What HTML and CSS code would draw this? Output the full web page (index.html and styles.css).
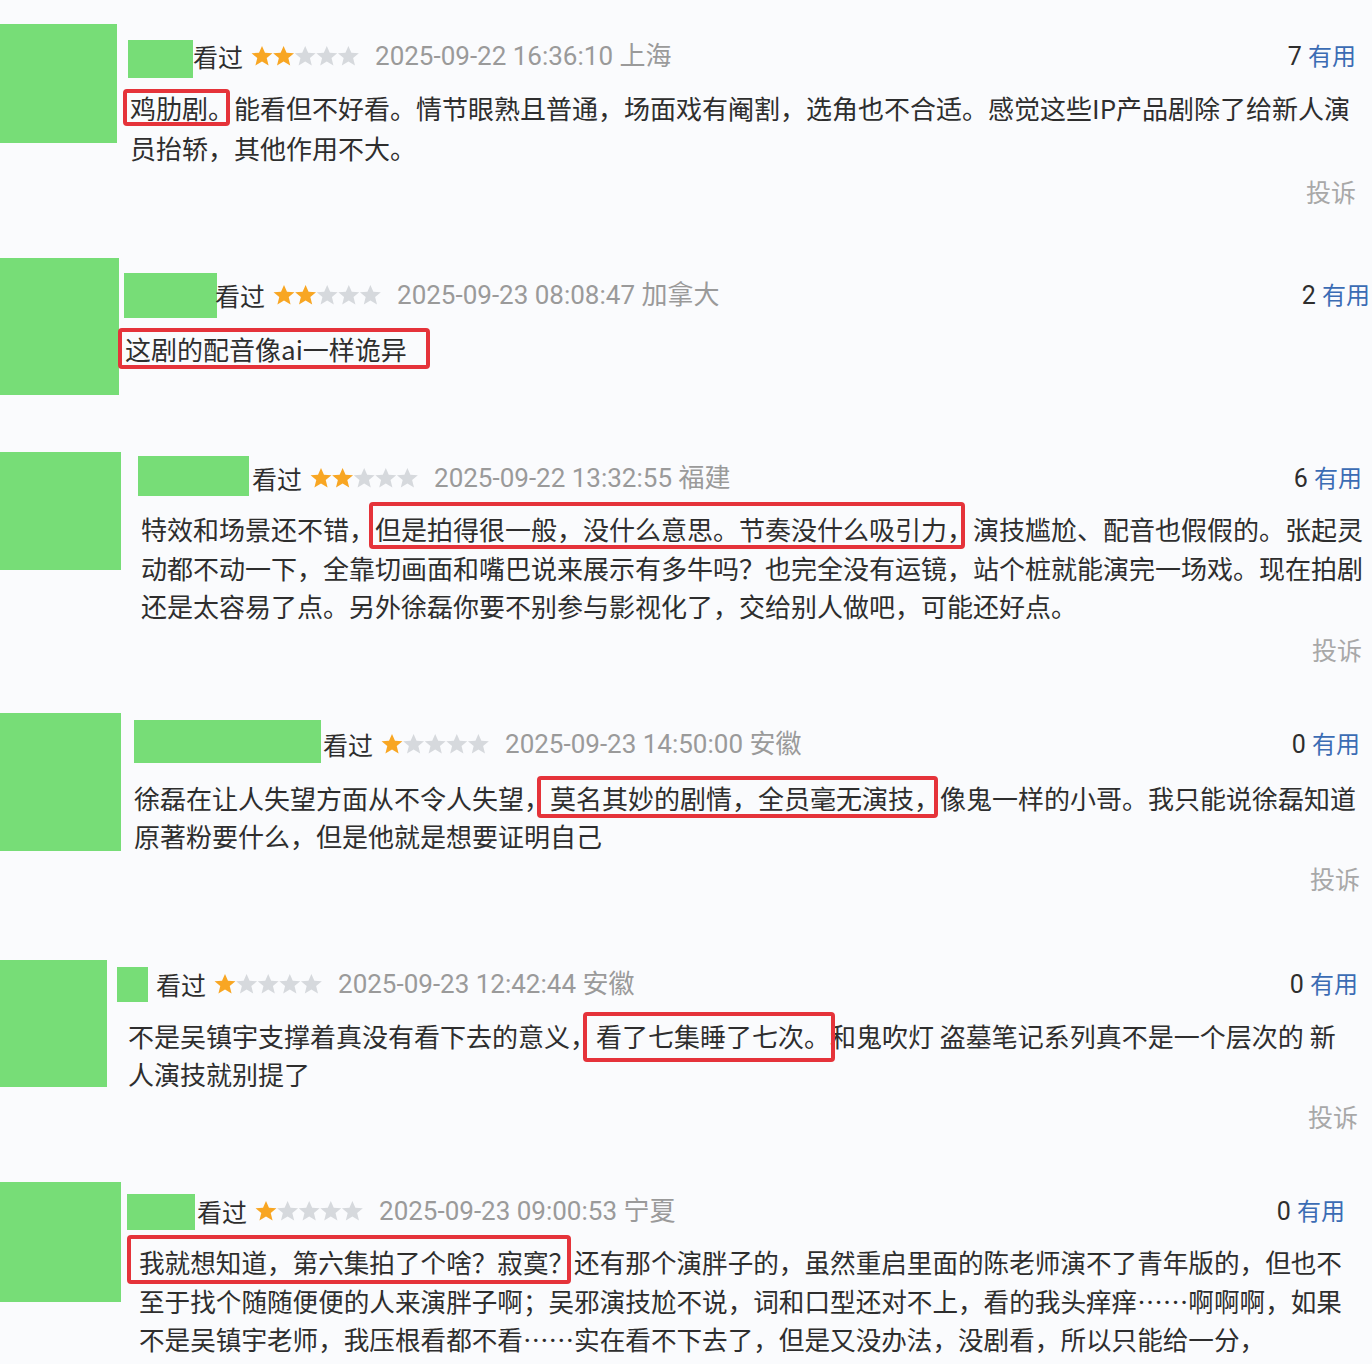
FILE: index.html
```html
<!DOCTYPE html>
<html lang="zh-CN">
<head>
    <meta charset="UTF-8">
    <meta name="viewport" content="width=device-width, initial-scale=1.0">
    <title>短评</title>
    <link rel="stylesheet" href="styles.css">
</head>
<body>
    <svg class="defs" width="0" height="0" aria-hidden="true">
        <symbol id="star" viewBox="0 0 20 20">
            <polygon points="10,0.8 12.7,7 19.5,7.5 14.3,11.9 16,18.6 10,15 4,18.6 5.7,11.9 0.5,7.5 7.3,7"/>
        </symbol>
    </svg>

    <div class="pagina">
        <!-- Comentario 1 -->
        <section class="comentario c1">
            <div class="avatar"></div>
            <div class="cuerpo">
                <div class="meta">
                    <span class="nombre"></span>
                    <span class="visto">看过</span>
                    <svg class="estrellas" width="110" height="22" viewBox="0 0 110 22">
                        <use href="#star" class="on" x="0" width="22" height="22"/>
                        <use href="#star" class="on" x="21.6" width="22" height="22"/>
                        <use href="#star" x="43.2" width="22" height="22"/>
                        <use href="#star" x="64.8" width="22" height="22"/>
                        <use href="#star" x="86.4" width="22" height="22"/>
                    </svg>
                    <span class="fecha">2025-09-22 16:36:10 上海</span>
                    <span class="votos"><span class="num">7</span> <span class="util">有用</span></span>
                </div>
                <p class="texto"><span class="marca">鸡肋剧。</span>能看但不好看。情节眼熟且普通，场面戏有阉割，选角也不合适。感觉这些IP产品剧除了给新人演<br>员抬轿，其他作用不大。</p>
                <div class="queja">投诉</div>
            </div>
        </section>

        <!-- Comentario 2 -->
        <section class="comentario c2">
            <div class="avatar"></div>
            <div class="cuerpo">
                <div class="meta">
                    <span class="nombre"></span>
                    <span class="visto">看过</span>
                    <svg class="estrellas" width="110" height="22" viewBox="0 0 110 22">
                        <use href="#star" class="on" x="0" width="22" height="22"/>
                        <use href="#star" class="on" x="21.6" width="22" height="22"/>
                        <use href="#star" x="43.2" width="22" height="22"/>
                        <use href="#star" x="64.8" width="22" height="22"/>
                        <use href="#star" x="86.4" width="22" height="22"/>
                    </svg>
                    <span class="fecha">2025-09-23 08:08:47 加拿大</span>
                    <span class="votos"><span class="num">2</span> <span class="util">有用</span></span>
                </div>
                <p class="texto"><span class="marca">这剧的配音像ai一样诡异</span></p>
            </div>
        </section>

        <!-- Comentario 3 -->
        <section class="comentario c3">
            <div class="avatar"></div>
            <div class="cuerpo">
                <div class="meta">
                    <span class="nombre"></span>
                    <span class="visto">看过</span>
                    <svg class="estrellas" width="110" height="22" viewBox="0 0 110 22">
                        <use href="#star" class="on" x="0" width="22" height="22"/>
                        <use href="#star" class="on" x="21.6" width="22" height="22"/>
                        <use href="#star" x="43.2" width="22" height="22"/>
                        <use href="#star" x="64.8" width="22" height="22"/>
                        <use href="#star" x="86.4" width="22" height="22"/>
                    </svg>
                    <span class="fecha">2025-09-22 13:32:55 福建</span>
                    <span class="votos"><span class="num">6</span> <span class="util">有用</span></span>
                </div>
                <p class="texto">特效和场景还不错，<span class="marca">但是拍得很一般，没什么意思。节奏没什么吸引力，</span>演技尴尬、配音也假假的。张起灵<br>动都不动一下，全靠切画面和嘴巴说来展示有多牛吗？也完全没有运镜，站个桩就能演完一场戏。现在拍剧<br>还是太容易了点。另外徐磊你要不别参与影视化了，交给别人做吧，可能还好点。</p>
                <div class="queja">投诉</div>
            </div>
        </section>

        <!-- Comentario 4 -->
        <section class="comentario c4">
            <div class="avatar"></div>
            <div class="cuerpo">
                <div class="meta">
                    <span class="nombre"></span>
                    <span class="visto">看过</span>
                    <svg class="estrellas" width="110" height="22" viewBox="0 0 110 22">
                        <use href="#star" class="on" x="0" width="22" height="22"/>
                        <use href="#star" x="21.6" width="22" height="22"/>
                        <use href="#star" x="43.2" width="22" height="22"/>
                        <use href="#star" x="64.8" width="22" height="22"/>
                        <use href="#star" x="86.4" width="22" height="22"/>
                    </svg>
                    <span class="fecha">2025-09-23 14:50:00 安徽</span>
                    <span class="votos"><span class="num">0</span> <span class="util">有用</span></span>
                </div>
                <p class="texto">徐磊在让人失望方面从不令人失望，<span class="marca">莫名其妙的剧情，全员毫无演技，</span>像鬼一样的小哥。我只能说徐磊知道<br>原著粉要什么，但是他就是想要证明自己</p>
                <div class="queja">投诉</div>
            </div>
        </section>

        <!-- Comentario 5 -->
        <section class="comentario c5">
            <div class="avatar"></div>
            <div class="cuerpo">
                <div class="meta">
                    <span class="nombre"></span>
                    <span class="visto">看过</span>
                    <svg class="estrellas" width="110" height="22" viewBox="0 0 110 22">
                        <use href="#star" class="on" x="0" width="22" height="22"/>
                        <use href="#star" x="21.6" width="22" height="22"/>
                        <use href="#star" x="43.2" width="22" height="22"/>
                        <use href="#star" x="64.8" width="22" height="22"/>
                        <use href="#star" x="86.4" width="22" height="22"/>
                    </svg>
                    <span class="fecha">2025-09-23 12:42:44 安徽</span>
                    <span class="votos"><span class="num">0</span> <span class="util">有用</span></span>
                </div>
                <p class="texto">不是吴镇宇支撑着真没有看下去的意义，<span class="marca">看了七集睡了七次。</span>和鬼吹灯 盗墓笔记系列真不是一个层次的 新<br>人演技就别提了</p>
                <div class="queja">投诉</div>
            </div>
        </section>

        <!-- Comentario 6 -->
        <section class="comentario c6">
            <div class="avatar"></div>
            <div class="cuerpo">
                <div class="meta">
                    <span class="nombre"></span>
                    <span class="visto">看过</span>
                    <svg class="estrellas" width="110" height="22" viewBox="0 0 110 22">
                        <use href="#star" class="on" x="0" width="22" height="22"/>
                        <use href="#star" x="21.6" width="22" height="22"/>
                        <use href="#star" x="43.2" width="22" height="22"/>
                        <use href="#star" x="64.8" width="22" height="22"/>
                        <use href="#star" x="86.4" width="22" height="22"/>
                    </svg>
                    <span class="fecha">2025-09-23 09:00:53 宁夏</span>
                    <span class="votos"><span class="num">0</span> <span class="util">有用</span></span>
                </div>
                <p class="texto"><span class="marca">我就想知道，第六集拍了个啥？寂寞？</span>还有那个演胖子的，虽然重启里面的陈老师演不了青年版的，但也不<br>至于找个随随便便的人来演胖子啊；吴邪演技尬不说，词和口型还对不上，看的我头痒痒……啊啊啊，如果<br>不是吴镇宇老师，我压根看都不看……实在看不下去了，但是又没办法，没剧看，所以只能给一分，</p>
            </div>
        </section>
    </div>
</body>
</html>
```

FILE: styles.css
```css
* {
    margin: 0;
    padding: 0;
    box-sizing: border-box;
}

:root {
    --fondo: #fafbfd;
    --verde: #77dd77;
    --texto: #2e2e2e;
    --gris: #9a9a9a;
    --gris-claro: #a8a8a8;
    --azul: #3b6cb4;
    --rojo: #e5333a;
    --estrella: #f8a623;
    --estrella-vacia: #d6d9dd;
}

body {
    background: var(--fondo);
    font-family: "Noto Sans CJK SC", sans-serif;
    color: var(--texto);
    width: 1372px;
    height: 1364px;
    overflow: hidden;
}

.defs {
    position: absolute;
    width: 0;
    height: 0;
}

.pagina {
    padding-top: 24px;
}

.comentario {
    display: flex;
    align-items: flex-start;
}

.avatar {
    flex: none;
    background: var(--verde);
}

.cuerpo {
    flex: 1;
    min-width: 0;
}

/* Cabecera del comentario */
.meta {
    display: flex;
    align-items: center;
    height: 40px;
    white-space: nowrap;
}

.nombre {
    flex: none;
    background: var(--verde);
}

.visto {
    font-size: 25px;
    line-height: 40px;
    color: var(--texto);
}

.estrellas {
    flex: none;
    margin-left: 8px;
    fill: var(--estrella-vacia);
}

.estrellas .on {
    fill: var(--estrella);
}

.fecha {
    margin-left: 14px;
    font-family: Roboto, "Noto Sans CJK SC", sans-serif;
    font-size: 26px;
    line-height: 40px;
    color: var(--gris);
}

.votos {
    margin-left: auto;
    font-family: Roboto, "Noto Sans CJK SC", sans-serif;
    font-size: 25px;
    line-height: 40px;
    color: var(--texto);
}

.util {
    font-family: "Noto Sans CJK SC", sans-serif;
    font-size: 24px;
    color: var(--azul);
}

/* Texto */
.texto {
    margin-top: 13px;
    font-size: 26px;
    line-height: 38px;
    white-space: nowrap;
}

.marca {
    position: relative;
}

.marca::after {
    content: "";
    position: absolute;
    top: -2px;
    bottom: -2px;
    left: -7px;
    right: -4px;
    border: 4px solid var(--rojo);
    border-radius: 4px;
}

.queja {
    margin-top: 4px;
    text-align: right;
    font-size: 25px;
    line-height: 38px;
    color: var(--gris-claro);
}

/* Cada captura tiene su propio recorte */
.c1 { height: 234px; padding-right: 16px; }
.c1 .avatar { width: 117px; height: 119px; }
.c1 .cuerpo { margin-left: 11px; padding-top: 12px; }
.c1 .nombre { width: 65px; height: 38px; margin-top: 6px; }
.c1 .texto { margin-left: 2px; margin-top: 12px; line-height: 40px; }
.c1 .marca::after { top: 0; bottom: 0; left: -7px; right: 4px; }

.c2 { height: 194px; padding-right: 2px; }
.c2 .avatar { width: 119px; height: 137px; }
.c2 .cuerpo { margin-left: 5px; padding-top: 17px; }
.c2 .nombre { width: 93px; height: 45px; margin-right: -2px; }
.c2 .texto { margin-left: 1px; margin-top: 15px; }
.c2 .marca::after { left: -7px; right: -23px; }

.c3 { height: 261px; padding-right: 10px; }
.c3 .avatar { width: 121px; height: 118px; }
.c3 .cuerpo { margin-left: 17px; padding-top: 6px; }
.c3 .nombre { width: 111px; height: 40px; margin-right: 3px; margin-top: -4px; }
.c3 .texto { margin-left: 3px; margin-top: 12px; line-height: 38.5px; }
.c3 .marca::after { top: -8px; bottom: -2px; left: -6px; right: 8px; }

.c4 { height: 247px; padding-right: 12px; }
.c4 .avatar { width: 121px; height: 138px; }
.c4 .cuerpo { margin-left: 13px; padding-top: 11px; }
.c4 .nombre { width: 187px; height: 43px; margin-right: 2px; margin-top: -5px; }
.c4 .texto { margin-left: 0; margin-top: 15px; }
.c4 .marca::after { top: -3px; bottom: -2px; left: -13px; right: 2px; }

.c5 { height: 222px; padding-right: 14px; }
.c5 .avatar { width: 107px; height: 127px; }
.c5 .cuerpo { margin-left: 10px; padding-top: 4px; }
.c5 .nombre { width: 31px; height: 35px; margin-right: 8px; }
.c5 .texto { margin-left: 11px; margin-top: 13px; }
.c5 .marca::after { top: -5px; bottom: -8px; left: -13px; right: -5px; }

.c6 { height: 182px; padding-right: 27px; }
.c6 .avatar { width: 121px; height: 120px; }
.c6 .cuerpo { margin-left: 6px; padding-top: 9px; }
.c6 .nombre { width: 68px; height: 36px; margin-right: 2px; margin-top: 2px; }
.c6 .texto { margin-left: 12px; margin-top: 12px; font-size: 25.6px; line-height: 38.5px; }
.c6 .marca::after { top: -8px; bottom: -4px; left: -12px; right: 3px; }
```
